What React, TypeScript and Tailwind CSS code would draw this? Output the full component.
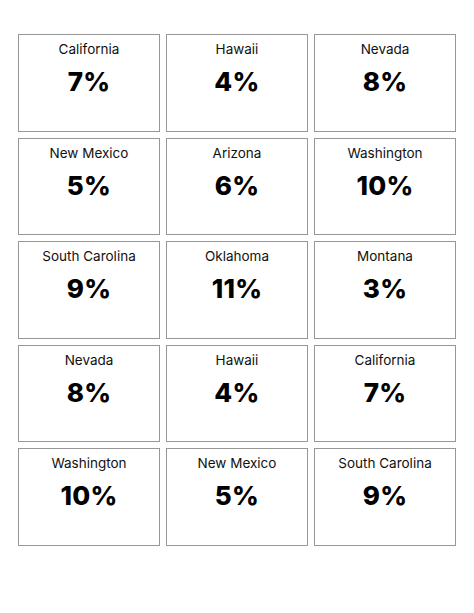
import React from "react";

const items: [string, string][] = [
  ["California", "7%"],
  ["Hawaii", "4%"],
  ["Nevada", "8%"],
  ["New Mexico", "5%"],
  ["Arizona", "6%"],
  ["Washington", "10%"],
  ["South Carolina", "9%"],
  ["Oklahoma", "11%"],
  ["Montana", "3%"],
  ["Nevada", "8%"],
  ["Hawaii", "4%"],
  ["California", "7%"],
  ["Washington", "10%"],
  ["New Mexico", "5%"],
  ["South Carolina", "9%"],
];

export default function App() {
  return (
    <div className="w-[474px] h-[613px] bg-white pt-[34px] pl-[18px]" style={{ fontFamily: "Inter, 'Liberation Sans', sans-serif" }}>
      <div className="grid grid-cols-[142px_142px_142px] gap-x-[6px] gap-y-[6px]">
        {items.map(([name, pct], i) => (
          <div key={i} className="h-[97.5px] border-[1.5px] border-[#979797] flex flex-col items-center pt-[5px]">
            <div className="text-[13.5px] leading-[18px] text-[#111]">{name}</div>
            <div className="text-[26px] leading-[30px] font-extrabold text-black mt-[9px] tracking-[0.3px]">{pct}</div>
          </div>
        ))}
      </div>
    </div>
  );
}
